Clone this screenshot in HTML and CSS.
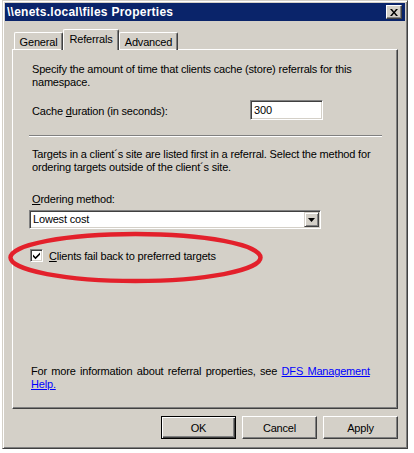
FILE: index.html
```html
<!DOCTYPE html>
<html>
<head>
<meta charset="utf-8">
<link rel="stylesheet" href="styles.css">
</head>
<body>
<div class="screen">
  <div class="window">
    <div class="titlebar">
      <span class="title">\\enets.local\files Properties</span>
      <span class="close"><svg width="8" height="7" viewBox="0 0 8 7"><path d="M0 0h2l2 2.5L6 0h2L5 3.5 8 7H6L4 4.5 2 7H0l3-3.5z" fill="#000"/></svg></span>
    </div>
    <div class="body">
      <div class="tabs">
        <div class="tab tab-general">General</div>
        <div class="tab tab-active">Referrals</div>
        <div class="tab tab-adv">Advanced</div>
      </div>
      <div class="panel">
        <p class="text t1">Specify the amount of time that clients cache (store) referrals for this<br>namespace.</p>
        <div class="row-cache">
          <span class="label">Cache <u>d</u>uration (in seconds):</span>
          <div class="textbox">300</div>
        </div>
        <div class="sep"></div>
        <p class="text t2">Targets in a client´s site are listed first in a referral. Select the method for<br>ordering targets outside of the client´s site.</p>
        <p class="text t3"><u>O</u>rdering method:</p>
        <div class="combo">
          <span class="combo-text">Lowest cost</span>
          <span class="combo-btn"><svg width="7" height="4" viewBox="0 0 7 4"><path d="M0 0h7L3.5 4z" fill="#000"/></svg></span>
        </div>
        <div class="check-row">
          <span class="checkbox"><svg width="9" height="9" viewBox="0 0 9 9"><path d="M1 3.5l2.5 2.5L8 1.5v2.2L3.5 8.2 1 5.7z" fill="#000"/></svg></span>
          <span class="label"><u>C</u>lients fail back to preferred targets</span>
        </div>
        <p class="text info">For more information about referral properties, see <a class="link">DFS Management</a><br><a class="link">Help.</a></p>
      </div>
      <div class="buttons">
        <div class="btn btn-default"><span>OK</span></div>
        <div class="btn"><span>Cancel</span></div>
        <div class="btn"><span>Apply</span></div>
      </div>
    </div>
  </div>
  <svg class="mark" width="414" height="453" viewBox="0 0 414 453">
    <ellipse cx="135.5" cy="257.5" rx="125" ry="23.5" fill="none" stroke="#e3202b" stroke-width="4.5"/>
  </svg>
</div>
</body>
</html>
```

FILE: styles.css
```css
html, body {
  margin: 0;
  padding: 0;
  background: #ffffff;
}
.screen {
  position: relative;
  width: 414px;
  height: 453px;
  overflow: hidden;
  font-family: "Liberation Sans", Arial, sans-serif;
  font-size: 11px;
  letter-spacing: -0.18px;
  color: #000;
}
.window {
  margin-left: 2px;
  width: 406px;
  height: 449px;
  box-sizing: border-box;
  background: #d4d0c8;
  border: 1px solid;
  border-color: #d4d0c8 #404040 #404040 #d4d0c8;
  box-shadow: inset 1px 1px 0 #ffffff, inset -1px -1px 0 #808080;
  padding: 2px;
  display: flex;
  flex-direction: column;
}
.titlebar {
  height: 18px;
  background: #0a246a;
  display: flex;
  align-items: center;
  justify-content: space-between;
  padding: 0 3px 0 2px;
}
.title {
  color: #fff;
  font-weight: bold;
  font-size: 12px;
  letter-spacing: 0.25px;
}
.close {
  width: 16px;
  height: 14px;
  box-sizing: border-box;
  background: #d4d0c8;
  border: 1px solid;
  border-color: #fff #404040 #404040 #fff;
  box-shadow: inset -1px -1px 0 #808080;
  display: flex;
  align-items: center;
  justify-content: center;
  padding-right: 1px;
}
.body {
  flex: 1;
  display: flex;
  flex-direction: column;
  padding: 9px 7px 0 7px;
}
.tabs {
  display: flex;
  align-items: flex-end;
  height: 20px;
  position: relative;
  z-index: 1;
  margin-bottom: -1px;
}
.tab {
  box-sizing: border-box;
  height: 18px;
  border-top: 1px solid #fff;
  border-left: 1px solid #fff;
  border-right: 1px solid #404040;
  box-shadow: inset -1px 0 0 #808080;
  border-radius: 2px 2px 0 0;
  display: flex;
  align-items: center;
  justify-content: center;
  padding-top: 1px;
}
.tab-general {
  margin-left: 2px;
  width: 49px;
}
.tab-active {
  width: 56px;
  height: 21px;
  background: #d4d0c8;
  padding-bottom: 3px;
}
.tab-adv {
  width: 59px;
}
.panel {
  height: 360px;
  box-sizing: border-box;
  border: 1px solid;
  border-color: #fff #404040 #404040 #fff;
  box-shadow: inset -1px -1px 0 #808080;
  padding: 13px 15px 17px 17px;
  display: flex;
  flex-direction: column;
}
.text {
  margin: 0;
  line-height: 13px;
  padding-left: 2px;
  white-space: nowrap;
}
.row-cache {
  margin-top: 11px;
  height: 20px;
  display: flex;
  align-items: center;
  justify-content: space-between;
  padding-left: 2px;
  padding-right: 59px;
}
.label {
  line-height: 13px;
  padding-top: 2px;
}
.textbox {
  width: 73px;
  height: 20px;
  box-sizing: border-box;
  background: #fff;
  border: 1px solid;
  border-color: #808080 #fff #fff #808080;
  box-shadow: inset 1px 1px 0 #404040, inset -1px -1px 0 #d4d0c8;
  padding: 3px 3px 0 3px;
  line-height: 13px;
}
.sep {
  margin-top: 15px;
  height: 0;
  border-top: 1px solid #808080;
  border-bottom: 1px solid #fff;
  margin-left: -1px;
}
.t2 {
  margin-top: 11px;
}
.t3 {
  margin-top: 19px;
}
.combo {
  margin-top: 4px;
  width: 292px;
  height: 19px;
  margin-left: -1px;
  box-sizing: border-box;
  background: #fff;
  border: 1px solid;
  border-color: #808080 #fff #fff #808080;
  box-shadow: inset 1px 1px 0 #404040, inset -1px -1px 0 #d4d0c8;
  display: flex;
  align-items: center;
  justify-content: space-between;
  padding: 1px 1px 1px 3px;
}
.combo-text {
  line-height: 13px;
}
.combo-btn {
  width: 15px;
  height: 15px;
  box-sizing: border-box;
  background: #d4d0c8;
  border: 1px solid;
  border-color: #d4d0c8 #404040 #404040 #d4d0c8;
  box-shadow: inset 1px 1px 0 #fff, inset -1px -1px 0 #808080;
  display: flex;
  align-items: center;
  justify-content: center;
}
.check-row {
  margin-top: 20px;
  display: flex;
  align-items: center;
  gap: 6px;
  height: 13px;
}
.checkbox {
  width: 13px;
  height: 13px;
  box-sizing: border-box;
  background: #fff;
  border: 1px solid;
  border-color: #808080 #fff #fff #808080;
  box-shadow: inset 1px 1px 0 #404040, inset -1px -1px 0 #d4d0c8;
  display: flex;
  align-items: center;
  justify-content: center;
}
.check-row .label {
  padding-top: 1px;
}
.info {
  margin-top: auto;
  padding-left: 1px;
  word-spacing: 1.5px;
}
.link {
  color: #0000ff;
  text-decoration: underline;
}
.buttons {
  margin-top: 7px;
  display: flex;
  justify-content: flex-end;
  gap: 6px;
}
.btn {
  width: 75px;
  height: 23px;
  box-sizing: border-box;
  background: #d4d0c8;
  border: 1px solid;
  border-color: #fff #404040 #404040 #fff;
  box-shadow: inset -1px -1px 0 #808080;
  display: flex;
  align-items: center;
  justify-content: center;
}
.btn-default {
  border: 1px solid #000;
  box-shadow: inset 1px 1px 0 #fff, inset -1px -1px 0 #404040, inset -2px -2px 0 #808080;
}
.mark {
  position: absolute;
  left: 0;
  top: 0;
  pointer-events: none;
}
```
